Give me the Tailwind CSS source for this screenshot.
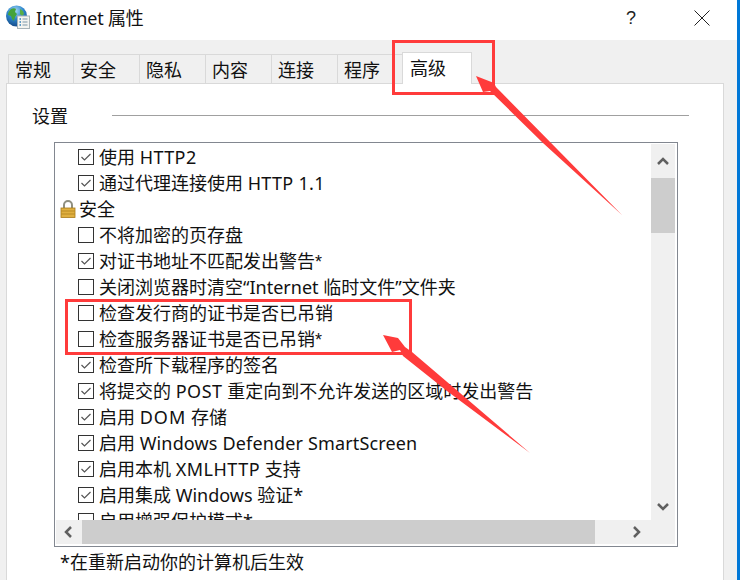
<!DOCTYPE html>
<html lang="zh-CN">
<head>
    <meta charset="UTF-8">
    <title>Internet 属性</title>
    <script src="https://cdn.jsdelivr.net/npm/@tailwindcss/browser@4"></script>
</head>
<body class="relative flex h-[580px] w-[740px] overflow-hidden bg-[#f0f0f0] font-['Noto_Sans','Noto_Sans_CJK_SC',sans-serif] text-[18px] leading-[26px] text-[#111]">

    <div class="flex w-[737px] flex-col">
        <!-- Title bar -->
        <header class="flex h-10 shrink-0 items-center bg-white pb-[4px] pl-[6px]">
            <svg class="mb-[2px] h-6 w-6 shrink-0" viewBox="0 0 24 24">
                <defs>
                    <radialGradient id="globe" cx="0.45" cy="0.25" r="0.85">
                        <stop offset="0" stop-color="#a6d8f5"/>
                        <stop offset="0.45" stop-color="#2c86cc"/>
                        <stop offset="1" stop-color="#103c78"/>
                    </radialGradient>
                </defs>
                <circle cx="10.500" cy="11" r="10.500" fill="url(#globe)"/>
                <path d="M5 4c2-1 4-1 5 0l-1 3 2 2-2 3-1 4-2-2-1-3-3-1c0-2 1-4 3-6z" fill="#45a33a"/>
                <path d="M14 4l3 2 1 3-2 2-2-2z" fill="#58ae45"/>
                <rect x="11.500" y="11" width="12" height="12.500" fill="#f4f4f0" stroke="#a9b4b8"/>
                <path d="M16.500 14h5M16.500 17h5M16.500 20h5" stroke="#7d97a8"/>
                <path d="M13.500 14h1.500M13.500 17h1.500M13.500 20h1.500" stroke="#2f7fb8" stroke-width="1.500"/>
            </svg>
            <span class="ml-[6px] tracking-[-0.2px]">Internet 属性</span>
            <span class="ml-auto mr-[0px] w-[10px] font-['Liberation_Sans',sans-serif] text-[#222]">?</span>
            <svg class="ml-[58px] mr-[27px] h-4 w-4" viewBox="0 0 16 16" fill="none" stroke="#222" stroke-width="1"><path d="M0.500 0.500l15 15M15.500 0.500l-15 15"/></svg>
        </header>

        <!-- Tabs -->
        <nav class="relative z-10 -mb-px flex h-[44px] shrink-0 items-end pl-[8px]">
            <div class="mb-px h-[29px] w-[65px] border-t border-l border-[#d9d9d9] pl-[6px] leading-[31px]">常规</div>
            <div class="mb-px h-[29px] w-[66px] border-t border-l border-[#d9d9d9] pl-[6px] leading-[31px]">安全</div>
            <div class="mb-px h-[29px] w-[66px] border-t border-l border-[#d9d9d9] pl-[6px] leading-[31px]">隐私</div>
            <div class="mb-px h-[29px] w-[66px] border-t border-l border-[#d9d9d9] pl-[6px] leading-[31px]">内容</div>
            <div class="mb-px h-[29px] w-[66px] border-t border-l border-[#d9d9d9] pl-[6px] leading-[31px]">连接</div>
            <div class="mb-px h-[29px] w-[65px] border-t border-l border-[#d9d9d9] pl-[6px] leading-[31px]">程序</div>
            <div class="h-[32px] w-[70px] border-x border-t border-[#d9d9d9] bg-white pl-[7px] leading-[31px]">高级</div>
        </nav>

        <!-- Tab pane -->
        <main class="ml-[6px] mr-[13px] flex-1 border border-b-0 border-[#d9d9d9] bg-white pt-[20px]">
            <div class="flex h-6 items-center pl-[25px]">
                <span>设置</span>
                <div class="ml-[44px] mb-[2px] h-px w-[577px] bg-[#a0a0a0]"></div>
            </div>

            <div class="ml-[47px] mt-[14px] grid h-[405px] w-[624px] grid-cols-[595px_24px] grid-rows-[376px_24px] border border-[#828790] p-px">
                <!-- Settings list -->
                <div class="overflow-hidden whitespace-nowrap">
                    <div class="flex h-[26px] items-center gap-[5px] pl-[22px]"><svg class="h-4 w-4 shrink-0" viewBox="0 0 16 16"><rect x="0.500" y="0.500" width="15" height="15" fill="#fff" stroke="#333"/><path d="M3.500 8l3 3 6-6" fill="none" stroke="#555" stroke-width="1.200"/></svg><span>使用 <span class="tracking-[0.4px]">HTTP2</span></span></div>
                    <div class="flex h-[26px] items-center gap-[5px] pl-[22px]"><svg class="h-4 w-4 shrink-0" viewBox="0 0 16 16"><rect x="0.500" y="0.500" width="15" height="15" fill="#fff" stroke="#333"/><path d="M3.500 8l3 3 6-6" fill="none" stroke="#555" stroke-width="1.200"/></svg><span>通过代理连接使用 <span class="tracking-[0.3px]">HTTP 1.1</span></span></div>
                    <div class="flex h-[26px] items-center gap-[3px] pl-1">
                        <svg class="h-[18px] w-4 shrink-0" viewBox="0 0 16 18">
                            <path d="M4 8V5a4 4 0 0 1 8 0v3" fill="none" stroke="#8f8f80" stroke-width="2"/>
                            <rect x="1" y="8" width="14" height="9.500" fill="#e0b040" stroke="#a87a18" stroke-width="0.800"/>
                            <path d="M1 11h14M1 14h14" stroke="#b98a22"/>
                        </svg>
                        安全
                    </div>
                    <div class="flex h-[26px] items-center gap-[5px] pl-[22px]"><svg class="h-4 w-4 shrink-0" viewBox="0 0 16 16"><rect x="0.500" y="0.500" width="15" height="15" fill="#fff" stroke="#333"/></svg>不将加密的页存盘</div>
                    <div class="flex h-[26px] items-center gap-[5px] pl-[22px]"><svg class="h-4 w-4 shrink-0" viewBox="0 0 16 16"><rect x="0.500" y="0.500" width="15" height="15" fill="#fff" stroke="#333"/><path d="M3.500 8l3 3 6-6" fill="none" stroke="#555" stroke-width="1.200"/></svg><span>对证书地址不匹配发出警告<span class="font-['Liberation_Sans',sans-serif]">*</span></span></div>
                    <div class="flex h-[26px] items-center gap-[5px] pl-[22px]"><svg class="h-4 w-4 shrink-0" viewBox="0 0 16 16"><rect x="0.500" y="0.500" width="15" height="15" fill="#fff" stroke="#333"/></svg>关闭浏览器时清空“Internet 临时文件”文件夹</div>
                    <div class="flex h-[26px] items-center gap-[5px] pl-[22px]"><svg class="h-4 w-4 shrink-0" viewBox="0 0 16 16"><rect x="0.500" y="0.500" width="15" height="15" fill="#fff" stroke="#333"/></svg>检查发行商的证书是否已吊销</div>
                    <div class="flex h-[26px] items-center gap-[5px] pl-[22px]"><svg class="h-4 w-4 shrink-0" viewBox="0 0 16 16"><rect x="0.500" y="0.500" width="15" height="15" fill="#fff" stroke="#333"/></svg><span>检查服务器证书是否已吊销<span class="font-['Liberation_Sans',sans-serif]">*</span></span></div>
                    <div class="flex h-[26px] items-center gap-[5px] pl-[22px]"><svg class="h-4 w-4 shrink-0" viewBox="0 0 16 16"><rect x="0.500" y="0.500" width="15" height="15" fill="#fff" stroke="#333"/><path d="M3.500 8l3 3 6-6" fill="none" stroke="#555" stroke-width="1.200"/></svg>检查所下载程序的签名</div>
                    <div class="flex h-[26px] items-center gap-[5px] pl-[22px]"><svg class="h-4 w-4 shrink-0" viewBox="0 0 16 16"><rect x="0.500" y="0.500" width="15" height="15" fill="#fff" stroke="#333"/><path d="M3.500 8l3 3 6-6" fill="none" stroke="#555" stroke-width="1.200"/></svg><span>将提交的 <span class="tracking-[0.5px]">POST</span> 重定向到不允许发送的区域时发出警告</span></div>
                    <div class="flex h-[26px] items-center gap-[5px] pl-[22px]"><svg class="h-4 w-4 shrink-0" viewBox="0 0 16 16"><rect x="0.500" y="0.500" width="15" height="15" fill="#fff" stroke="#333"/><path d="M3.500 8l3 3 6-6" fill="none" stroke="#555" stroke-width="1.200"/></svg><span>启用 <span class="tracking-[1px]">DOM</span> 存储</span></div>
                    <div class="flex h-[26px] items-center gap-[5px] pl-[22px]"><svg class="h-4 w-4 shrink-0" viewBox="0 0 16 16"><rect x="0.500" y="0.500" width="15" height="15" fill="#fff" stroke="#333"/><path d="M3.500 8l3 3 6-6" fill="none" stroke="#555" stroke-width="1.200"/></svg><span>启用 <span class="tracking-[0.15px]">Windows Defender SmartScreen</span></span></div>
                    <div class="flex h-[26px] items-center gap-[5px] pl-[22px]"><svg class="h-4 w-4 shrink-0" viewBox="0 0 16 16"><rect x="0.500" y="0.500" width="15" height="15" fill="#fff" stroke="#333"/><path d="M3.500 8l3 3 6-6" fill="none" stroke="#555" stroke-width="1.200"/></svg><span>启用本机 <span class="tracking-[0.5px]">XMLHTTP</span> 支持</span></div>
                    <div class="flex h-[26px] items-center gap-[5px] pl-[22px]"><svg class="h-4 w-4 shrink-0" viewBox="0 0 16 16"><rect x="0.500" y="0.500" width="15" height="15" fill="#fff" stroke="#333"/><path d="M3.500 8l3 3 6-6" fill="none" stroke="#555" stroke-width="1.200"/></svg>启用集成 Windows 验证*</div>
                    <div class="flex h-[26px] items-center gap-[5px] pl-[22px]"><svg class="h-4 w-4 shrink-0" viewBox="0 0 16 16"><rect x="0.500" y="0.500" width="15" height="15" fill="#fff" stroke="#333"/></svg>启用增强保护模式*</div>
                </div>

                <!-- Vertical scrollbar -->
                <div class="flex flex-col bg-[#f0f0f0]">
                    <div class="flex h-[34px] items-center justify-center">
                        <svg class="h-[10px] w-3" viewBox="0 0 12 10" fill="none" stroke="#606060" stroke-width="2.500"><path d="M1 8l5-5 5 5"/></svg>
                    </div>
                    <div class="h-[55px] bg-[#cdcdcd]"></div>
                    <div class="mt-auto flex h-[24px] items-center justify-center pb-[2px]">
                        <svg class="h-[10px] w-3" viewBox="0 0 12 10" fill="none" stroke="#606060" stroke-width="2.500"><path d="M1 2l5 5 5-5"/></svg>
                    </div>
                </div>

                <!-- Horizontal scrollbar -->
                <div class="flex bg-[#f0f0f0]">
                    <div class="flex w-[26px] items-center justify-center pr-[2px]">
                        <svg class="h-3 w-[10px]" viewBox="0 0 10 12" fill="none" stroke="#606060" stroke-width="2.500"><path d="M8 1L3 6l5 5"/></svg>
                    </div>
                    <div class="w-[513px] bg-[#cdcdcd]"></div>
                    <div class="flex flex-1 items-center justify-end pr-[9px]">
                        <svg class="h-3 w-[10px]" viewBox="0 0 10 12" fill="none" stroke="#606060" stroke-width="2.500"><path d="M2 1l5 5-5 5"/></svg>
                    </div>
                </div>
                <div class="bg-[#f0f0f0]"></div>
            </div>

            <p class="ml-[53px] mt-[2px]">*在重新启动你的计算机后生效</p>
        </main>
    </div>

    <!-- Desktop behind the window -->
    <div class="w-[3px] bg-[#0078d7]"></div>

    <!-- Red annotations over the screenshot -->
    <div class="absolute left-[392px] top-[40px] z-20 h-[55px] w-[103px] border-[3px] border-[#ff3b3b]"></div>
    <div class="absolute left-[65px] top-[299px] z-20 h-[56px] w-[347px] border-[3px] border-[#ff3b3b]"></div>
    <svg class="absolute left-0 top-0 z-30 h-[580px] w-[740px]" viewBox="0 0 740 580">
        <polygon points="476,76 494,83 496,87 622,215 543,143 490,91 483,92" fill="#ff3b3b"/>
        <polygon points="383,335 398,338 405,347 412,352 453,387 530,453 447,391 403,356 400,350 392,352" fill="#ff3b3b"/>
    </svg>
</body>
</html>
